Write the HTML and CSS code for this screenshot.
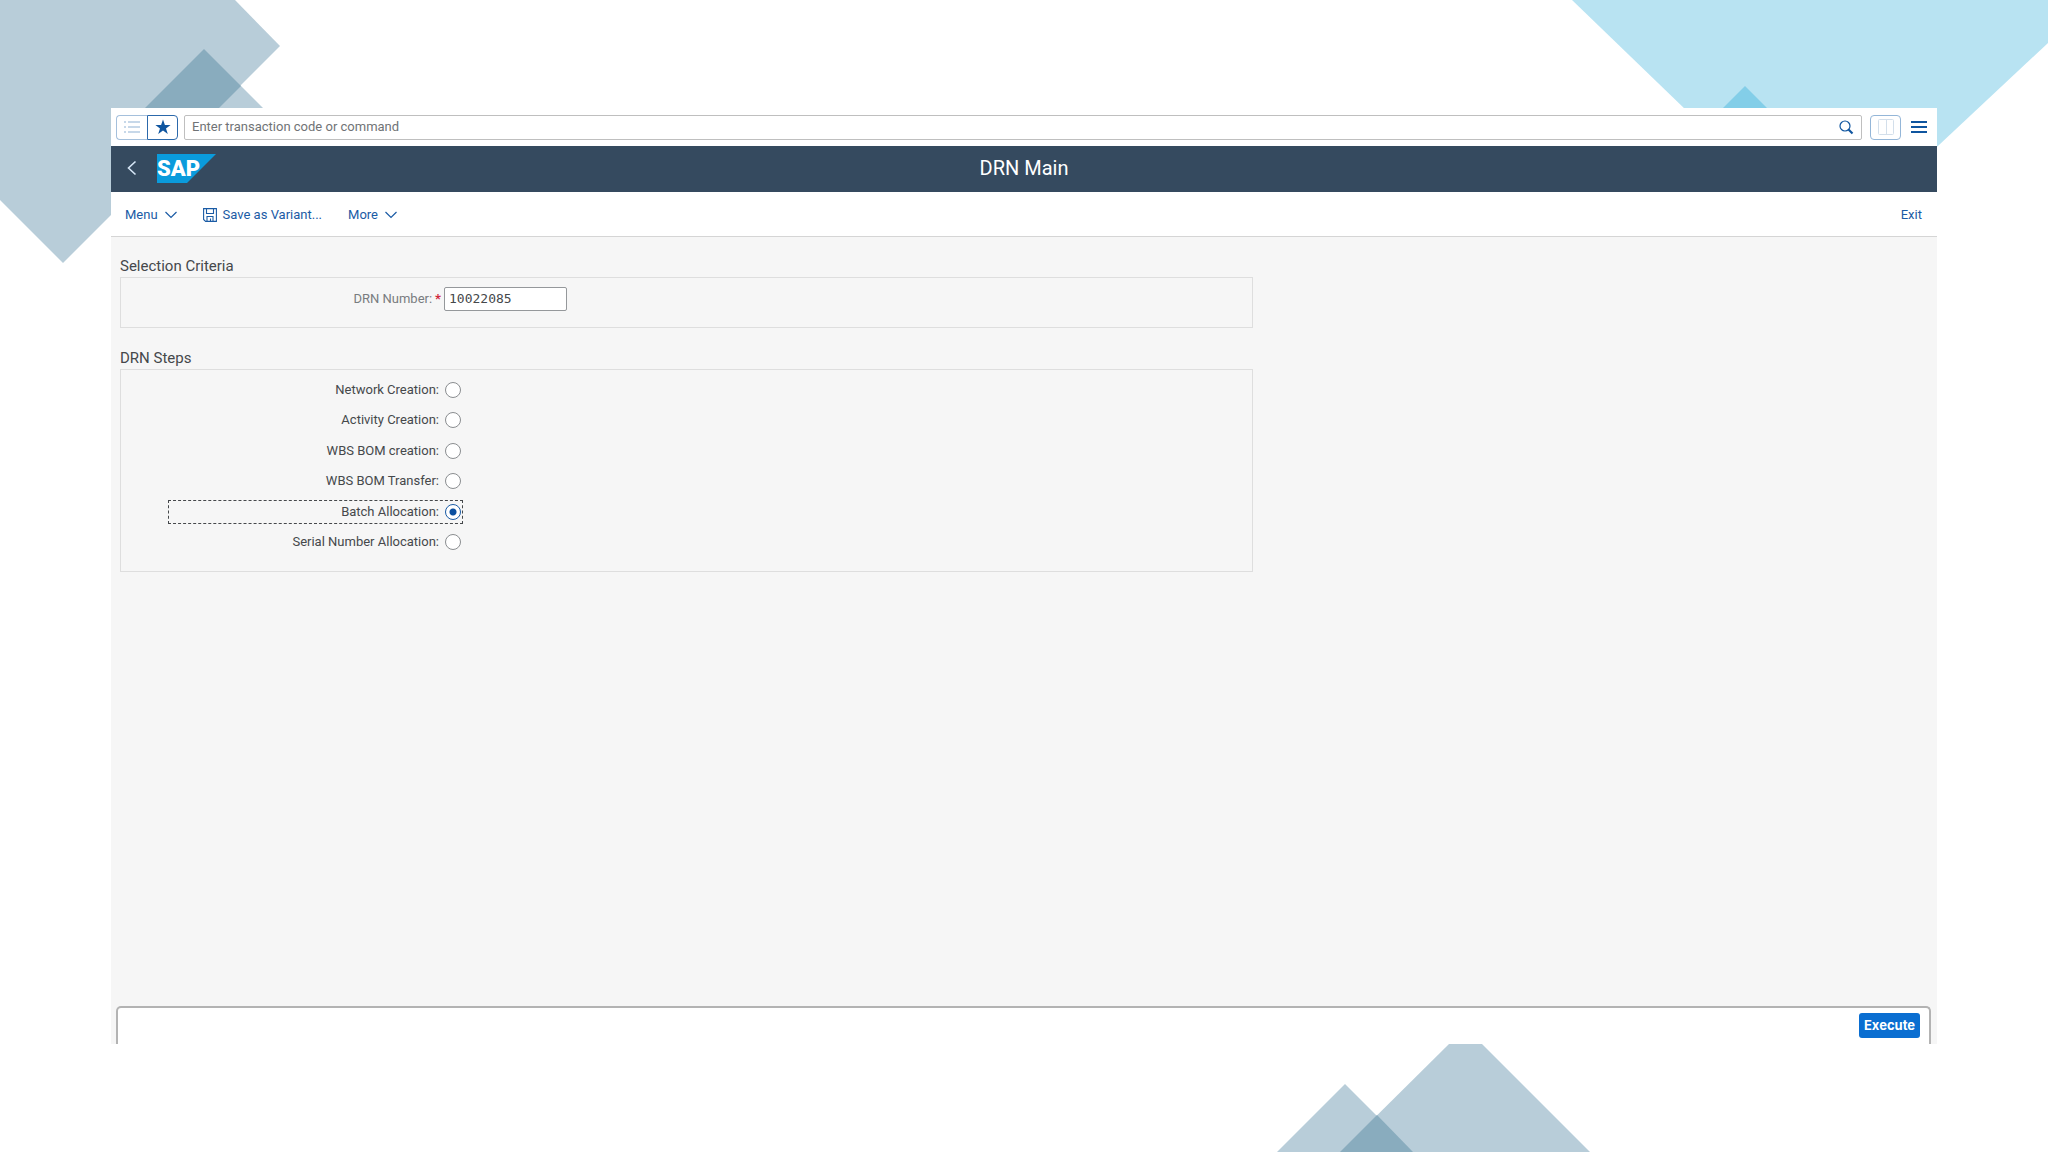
FILE: index.html
```html
<!DOCTYPE html>
<html lang="en">
<head>
<meta charset="utf-8">
<title>DRN Main</title>
<link rel="stylesheet" href="styles.css">
</head>
<body>
<svg class="decor decor-left" width="281" height="264" viewBox="0 0 281 264" aria-hidden="true">
  <path class="slate" d="M0 0H235L280 46L63 263L0 200Z"/>
  <path class="slate" d="M204 49L264 109H144Z"/>
  <path class="slate-dark" d="M204 49L241 86L218 109H144Z"/>
</svg>
<svg class="decor decor-right" width="476" height="248" viewBox="0 0 476 248" aria-hidden="true">
  <path class="sky" d="M0 0H476V43L257 248Z"/>
  <path class="sky-dark" d="M173 86L196 109H150Z"/>
</svg>
<svg class="decor decor-bottom" width="313" height="108" viewBox="0 0 313 108" aria-hidden="true">
  <path class="slate" d="M172 0H205L313 108H63Z"/>
  <path class="slate" d="M68 40L136 108H0Z"/>
  <path class="slate-dark" d="M100 71L136 108H63Z"/>
</svg>

<div class="window">
  <div class="command-bar">
    <div class="segmented">
      <button class="seg seg-muted" type="button" aria-label="List">
        <svg width="16" height="14" viewBox="0 0 16 14" fill="none" stroke="currentColor"><path d="M0 2H2M0 7H2M0 12H2M4 2H16M4 7H16M4 12H16" stroke-width="1.3"/></svg>
      </button>
      <button class="seg seg-active" type="button" aria-label="Favorites">
        <svg width="16" height="16" viewBox="0 0 16 16" fill="currentColor"><path d="M8 .5L9.900 5.900H15.600L11 9.400L12.800 15L8 11.600L3.200 15L5 9.400L.4 5.900H6.100Z"/></svg>
      </button>
    </div>
    <form class="command-field" role="search">
      <input class="command-input" type="text" aria-label="Command" placeholder="Enter transaction code or command">
      <button class="icon-button" type="submit" aria-label="Search">
        <svg width="15" height="15" viewBox="0 0 15 15" fill="none" stroke="currentColor"><circle cx="6" cy="6" r="5" stroke-width="1.2"/><path d="M9.500 9.500L13.500 13.500" stroke-width="2.2"/></svg>
      </button>
    </form>
    <button class="panel-button" type="button" aria-label="Split view">
      <svg width="16" height="16" viewBox="0 0 16 16" fill="none" stroke="currentColor"><rect x=".5" y=".5" width="15" height="15" rx="1"/><path d="M8.500 .5V15.500"/></svg>
    </button>
    <button class="icon-button" type="button" aria-label="Options">
      <svg width="16" height="14" viewBox="0 0 16 14" fill="none" stroke="currentColor"><path d="M0 2H16M0 7H16M0 12H16" stroke-width="2"/></svg>
    </button>
  </div>

  <header class="title-bar">
    <div class="title-start">
      <button class="back-button" type="button" aria-label="Back">
        <svg width="10" height="16" viewBox="0 0 10 16" fill="none" stroke="currentColor" stroke-width="1.6"><path d="M8.500 1.500L1.500 8L8.500 14.500"/></svg>
      </button>
      <svg class="logo" width="59" height="29" viewBox="0 0 59 29" role="img" aria-label="SAP">
        <path d="M0 0H59L30 29H0Z" fill="#0a9bdc"/>
        <text class="logo-text" x="0" y="22">SAP</text>
      </svg>
    </div>
    <h1 class="title">DRN Main</h1>
    <div></div>
  </header>

  <nav class="toolbar">
    <button class="tool" type="button">Menu
      <svg width="12" height="8" viewBox="0 0 12 8" fill="none" stroke="currentColor" stroke-width="1.2"><path d="M.5 1L6 6.500L11.500 1"/></svg>
    </button>
    <button class="tool tool-save" type="button">
      <svg width="14" height="14" viewBox="0 0 14 14" fill="none" stroke="currentColor" stroke-width="1.1"><path d="M.6 .6H13.400V13.400H2.600L.6 11.400ZM3.500 .6V5.500H10.500V.6M4 13.400V8.500H10V13.400M7.500 10.500V13.400"/></svg>
      Save as Variant...
    </button>
    <button class="tool" type="button">More
      <svg width="12" height="8" viewBox="0 0 12 8" fill="none" stroke="currentColor" stroke-width="1.2"><path d="M.5 1L6 6.500L11.500 1"/></svg>
    </button>
    <button class="tool tool-exit" type="button">Exit</button>
  </nav>

  <main class="content">
    <section class="group">
      <h2 class="group-title">Selection Criteria</h2>
      <div class="group-box criteria">
        <label class="field-label" for="drn">DRN Number:<span class="required">*</span></label>
        <input class="field-input" id="drn" type="text" value="10022085">
      </div>
    </section>
    <section class="group">
      <h2 class="group-title">DRN Steps</h2>
      <div class="group-box steps">
        <label class="step">Network Creation:<input class="radio" type="radio" name="step"></label>
        <label class="step">Activity Creation:<input class="radio" type="radio" name="step"></label>
        <label class="step">WBS BOM creation:<input class="radio" type="radio" name="step"></label>
        <label class="step">WBS BOM Transfer:<input class="radio" type="radio" name="step"></label>
        <label class="step step-focused">Batch Allocation:<input class="radio" type="radio" name="step" checked></label>
        <label class="step">Serial Number Allocation:<input class="radio" type="radio" name="step"></label>
      </div>
    </section>
  </main>

  <footer class="action-bar">
    <button class="execute" type="button">Execute</button>
  </footer>
</div>
</body>
</html>
```
FILE: styles.css
```css
* { box-sizing: border-box; }

body {
  margin: 0;
  min-height: 100vh;
  padding: 108px 111px;
  position: relative;
  display: flex;
  overflow-x: hidden;
  background: #fff;
  color: #45484b;
  font-family: Roboto, "Liberation Sans", sans-serif;
  font-size: 13px;
  line-height: 16px;
}

button, input { font: inherit; color: inherit; margin: 0; }

button {
  display: inline-flex;
  align-items: center;
  justify-content: center;
  padding: 0;
  border: 0;
  background: none;
  cursor: pointer;
}

svg { display: block; flex: none; }

/* Background shapes */
.decor { position: absolute; }
.decor-left { top: 0; left: 0; }
.decor-right { top: 0; right: 0; }
.decor-bottom { bottom: 0; right: 458px; }
.slate { fill: #b8cdd9; }
.slate-dark { fill: #89acbe; }
.sky { fill: #b8e3f2; }
.sky-dark { fill: #83cee8; }

.window {
  position: relative;
  flex: 1;
  min-width: 0;
  display: flex;
  flex-direction: column;
  background: #f6f6f6;
}

/* Command bar */
.command-bar {
  display: flex;
  align-items: center;
  height: 38px;
  padding: 0 10px 0 5px;
  background: #fff;
  color: #0f559f;
}
.segmented { display: flex; margin-right: 6px; }
.seg { width: 31px; height: 25px; border: 1px solid #2c69ab; }
.seg-muted {
  border-color: #a5c0dc;
  border-right: 0;
  border-radius: 4px 0 0 4px;
  color: #b5cbe2;
}
.seg-active { border-radius: 0 4px 4px 0; }
.command-field {
  flex: 1;
  display: flex;
  align-items: center;
  height: 25px;
  margin-right: 8px;
  padding: 0 7px;
  border: 1px solid #bfbfbf;
  border-radius: 2px;
}
.command-input {
  flex: 1;
  min-width: 0;
  padding: 0;
  border: 0;
  outline: 0;
  background: none;
}
.command-input::placeholder { color: #707376; opacity: 1; }
.panel-button {
  width: 31px;
  height: 25px;
  margin-right: 10px;
  border: 1px solid #94b6d8;
  border-radius: 4px;
  color: #d3dfeb;
}

/* Title bar */
.title-bar {
  display: grid;
  grid-template-columns: 1fr auto 1fr;
  align-items: center;
  height: 46px;
  padding-bottom: 2px;
  background: #354a5f;
  color: #fff;
}
.title-start { display: flex; align-items: center; gap: 20px; padding-left: 15px; }
.back-button { width: 11px; color: #d5e6f6; }
.logo-text { font: 900 22px Roboto, "Liberation Sans", sans-serif; fill: #fff; }
.title { margin: 0; font-size: 20px; line-height: 24px; font-weight: 400; }

/* Toolbar */
.toolbar {
  display: flex;
  align-items: center;
  gap: 26px;
  height: 45px;
  padding: 2px 15px 0 14px;
  border-bottom: 1px solid #d5d5d5;
  background: #fff;
}
.tool { gap: 7px; color: #1a5ba5; }
.tool-save { gap: 6px; }
.tool-exit { margin-left: auto; }

/* Form */
.content {
  flex: 1;
  display: flex;
  flex-direction: column;
  gap: 20px;
  width: 63%;
  padding: 19px 8px 20px 9px;
}
.group-title { margin: 0 0 1px; font-size: 15px; line-height: 20px; font-weight: 400; }
.group-box { border: 1px solid #dedede; }
.criteria {
  display: flex;
  align-items: center;
  height: 51px;
  padding-bottom: 8px;
}
.field-label {
  display: flex;
  justify-content: flex-end;
  gap: 3px;
  width: 320px;
  margin-right: 3px;
  color: #797c7f;
}
.required { color: #d0283a; font-weight: 700; }
.field-input {
  width: 123px;
  height: 24px;
  padding: 0 4px;
  border: 1px solid #95989b;
  border-radius: 2px;
  background: #fff;
  font-family: "DejaVu Sans Mono", monospace;
}
.steps {
  display: flex;
  flex-direction: column;
  justify-content: space-between;
  height: 203px;
  padding: 8px 0 17px 47px;
}
.step {
  display: flex;
  align-items: center;
  justify-content: flex-end;
  gap: 6px;
  width: 295px;
  height: 24px;
  padding-right: 1px;
  border: 1px dashed transparent;
}
.step-focused { border-color: #45484b; }
.radio {
  appearance: none;
  width: 16px;
  height: 16px;
  border: 1px solid #8a8d90;
  border-radius: 50%;
  background: #fff;
}
.radio:checked {
  border-color: #1a5ba5;
  background: radial-gradient(circle, #0a4fa0 3px, #fff 4px);
}

/* Action bar */
.action-bar {
  display: flex;
  align-items: center;
  justify-content: flex-end;
  height: 38px;
  margin: 0 6px 0 5px;
  padding: 0 9px 2px 0;
  border: 2px solid #b3b3b3;
  border-bottom: 0;
  border-radius: 5px 5px 0 0;
  background: #fff;
}
.execute {
  width: 61px;
  height: 25px;
  border-radius: 3px;
  background: #0a6ed1;
  color: #fff;
  font-family: Inter, sans-serif;
  font-weight: 700;
}
```
